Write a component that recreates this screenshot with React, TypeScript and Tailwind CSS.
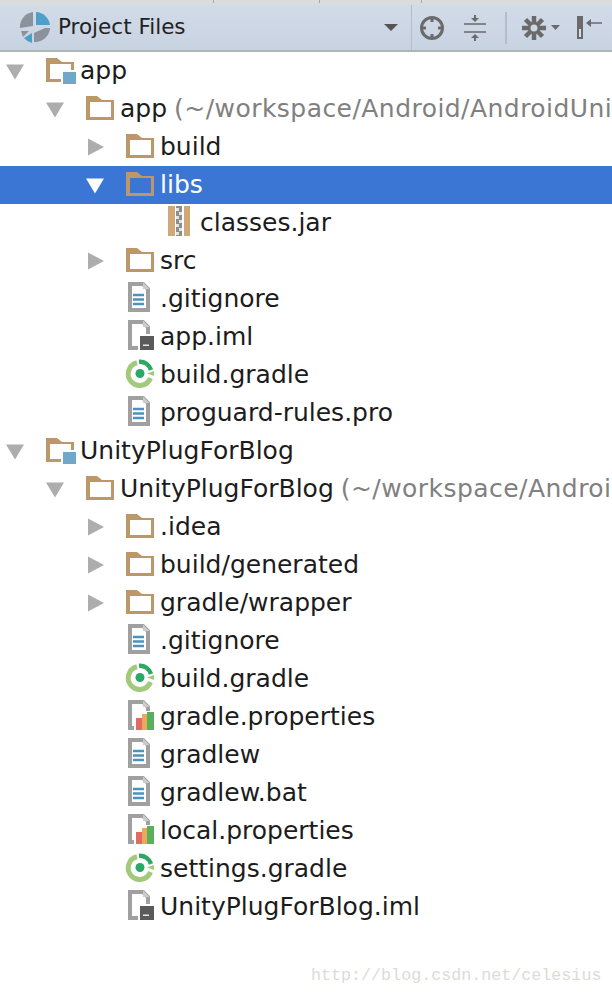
type Kind = "module" | "folder" | "jar" | "text" | "iml" | "gradle" | "props";

type Row = {
  depth: number;
  name: string;
  kind: Kind;
  arrow?: "open" | "closed";
  path?: string;
  selected?: boolean;
};

const rows: Row[] = [
  { depth: 0, name: "app", kind: "module", arrow: "open" },
  { depth: 1, name: "app", kind: "folder", arrow: "open", path: "(~/workspace/Android/AndroidUni" },
  { depth: 2, name: "build", kind: "folder", arrow: "closed" },
  { depth: 2, name: "libs", kind: "folder", arrow: "open", selected: true },
  { depth: 3, name: "classes.jar", kind: "jar" },
  { depth: 2, name: "src", kind: "folder", arrow: "closed" },
  { depth: 2, name: ".gitignore", kind: "text" },
  { depth: 2, name: "app.iml", kind: "iml" },
  { depth: 2, name: "build.gradle", kind: "gradle" },
  { depth: 2, name: "proguard-rules.pro", kind: "text" },
  { depth: 0, name: "UnityPlugForBlog", kind: "module", arrow: "open" },
  { depth: 1, name: "UnityPlugForBlog", kind: "folder", arrow: "open", path: "(~/workspace/Androi" },
  { depth: 2, name: ".idea", kind: "folder", arrow: "closed" },
  { depth: 2, name: "build/generated", kind: "folder", arrow: "closed" },
  { depth: 2, name: "gradle/wrapper", kind: "folder", arrow: "closed" },
  { depth: 2, name: ".gitignore", kind: "text" },
  { depth: 2, name: "build.gradle", kind: "gradle" },
  { depth: 2, name: "gradle.properties", kind: "props" },
  { depth: 2, name: "gradlew", kind: "text" },
  { depth: 2, name: "gradlew.bat", kind: "text" },
  { depth: 2, name: "local.properties", kind: "props" },
  { depth: 2, name: "settings.gradle", kind: "gradle" },
  { depth: 2, name: "UnityPlugForBlog.iml", kind: "iml" },
];

const indent = ["pl-0", "pl-[40px]", "pl-[80px]", "pl-[120px]"];

function Arrow({ type, selected }: { type?: "open" | "closed"; selected?: boolean }) {
  const fill = selected ? "#ffffff" : "#adadad";
  return (
    <svg width="40" height="38" viewBox="0 0 40 38" className="shrink-0">
      {type === "open" && <polygon points="6,12.5 24,12.5 15,27.5" fill={fill} />}
      {type === "closed" && <polygon points="8,10.5 8,27.5 24,19" fill={fill} />}
    </svg>
  );
}

function FileShape() {
  return (
    <g transform="translate(8 2)">
      <path d="M2 2 H15 L20 7 V28 H2 Z" fill="#ffffff" stroke="#a0a0a0" strokeWidth="4" />
      <path d="M15 0.5 V7 H21.5 Z" fill="#cccccc" />
    </g>
  );
}

function FileIcon({ kind, selected }: { kind: Kind; selected?: boolean }) {
  const brown = "#bc9767";
  const inner = selected ? "#3b76d4" : "#ffffff";
  return (
    <svg width="40" height="38" viewBox="0 0 40 38" className="shrink-0">
      {(kind === "folder" || kind === "module") && (
        <>
          <path d="M6 6 H17 L22 10 H34 V30 H6 Z" fill={brown} />
          <rect x="10" y="12" width="21" height="15" fill={inner} />
        </>
      )}
      {kind === "module" && (
        <>
          <rect x="21" y="18" width="15" height="16" fill="#ffffff" />
          <rect x="23" y="20" width="13" height="12" fill="#70a8c8" />
        </>
      )}
      {kind === "jar" && (
        <>
          <rect x="8" y="2" width="7" height="30" fill="#cfa876" />
          <rect x="24" y="2" width="6" height="30" fill="#cfa876" />
          <rect x="16" y="2" width="6" height="30" fill="#8e8e8e" />
          <path
            d="M16 4h3v3h-3zM19 8h3v3h-3zM16 12h3v3h-3zM19 16h3v3h-3zM16 20h3v3h-3zM19 24h3v3h-3zM16 28h3v3h-3z"
            fill="#e4e4e4"
          />
        </>
      )}
      {kind === "text" && (
        <>
          <FileShape />
          <path d="M13 15 H24 M13 19.5 H24 M13 24 H24" stroke="#4a92bf" strokeWidth="2.5" />
        </>
      )}
      {kind === "iml" && (
        <>
          <FileShape />
          <rect x="18" y="16" width="16" height="16" fill="#ffffff" />
          <rect x="20" y="18" width="14" height="14" fill="#5a5a5a" />
          <rect x="23" y="26.5" width="6" height="1.5" fill="#e8e8e8" />
        </>
      )}
      {kind === "props" && (
        <>
          <FileShape />
          <rect x="14" y="13" width="20" height="19" fill="#ffffff" />
          <rect x="16" y="20" width="6" height="12" fill="#e26a66" />
          <rect x="22" y="16" width="5" height="16" fill="#eca858" />
          <rect x="27" y="14" width="7" height="18" fill="#58b05c" />
        </>
      )}
      {kind === "gradle" && (
        <>
          <path d="M30.5 22 A11.5 11.5 0 1 1 17 6.8" fill="none" stroke="#a3c97c" strokeWidth="5" />
          <path d="M19 5.8 A11.5 11.5 0 0 1 31 14" fill="none" stroke="#2fa866" strokeWidth="4.5" />
          <path d="M27 17.5 L34 15 L34 20 Z" fill="#a3c97c" />
          <circle cx="20" cy="17.5" r="4.5" fill="#2aa866" />
        </>
      )}
    </svg>
  );
}

function TreeRow({ row }: { row: Row }) {
  return (
    <div
      className={`flex h-[38px] items-center overflow-hidden whitespace-nowrap ${indent[row.depth]} ${
        row.selected ? "bg-[#3b76d4] text-white" : "text-[#1c1c1c]"
      }`}
    >
      <Arrow type={row.arrow} selected={row.selected} />
      <FileIcon kind={row.kind} selected={row.selected} />
      <span>{row.name}</span>
      {row.path && <span className="ml-[7px] tracking-[0.45px] text-[#808080]">{row.path}</span>}
    </div>
  );
}

function ProjectLogo() {
  return (
    <svg width="32" height="34" viewBox="0 0 32 34" className="shrink-0">
      <path d="M14 1 A15 15 0 0 0 1 17 L14 15 Z" fill="#8b929b" />
      <path d="M17 1 A15 15 0 0 1 31 14 L17 14 Z" fill="#4d9fc8" />
      <path d="M31 17 A15 15 0 0 1 15 31 L15 22 L26 17 Z" fill="#8b929b" />
      <path d="M13 22 L13 32 A15 15 0 0 1 5 27 Z" fill="#4d9fc8" />
      <path d="M2 20 L10 20 L4 26 Z" fill="#8b929b" />
    </svg>
  );
}

function HeaderIcons() {
  return (
    <div className="ml-auto flex h-full items-center">
      <svg width="14" height="7" viewBox="0 0 14 7" className="mr-[13px]">
        <polygon points="0,0 14,0 7,7" fill="#555555" />
      </svg>
      <div className="h-full w-[1px] bg-[#b4bcc8]" />
      <svg width="26" height="26" viewBox="0 0 26 26" className="ml-[7px]">
        <circle cx="13" cy="13" r="10.5" fill="none" stroke="#6a6a6a" strokeWidth="3" />
        <path d="M13 2 V7 M13 19 V24 M2 13 H7 M19 13 H24" stroke="#6a6a6a" strokeWidth="3" />
      </svg>
      <svg width="24" height="28" viewBox="0 0 24 28" className="ml-[18px]">
        <path d="M1 10 H23 M1 18 H23" stroke="#6a6a6a" strokeWidth="1.5" />
        <path d="M12 1 V6 M12 22 V27" stroke="#6a6a6a" strokeWidth="2" />
        <path d="M8 4 H16 L12 8 Z M8 24 H16 L12 20 Z" fill="#6a6a6a" />
      </svg>
      <div className="ml-[18px] h-[32px] w-[2px] bg-[#b4bcc8]" />
      <svg width="26" height="26" viewBox="0 0 26 26" className="ml-[14px]">
        <path
          d="M13 1 V25 M1 13 H25 M4.5 4.5 L21.5 21.5 M21.5 4.5 L4.5 21.5"
          stroke="#6a6a6a"
          strokeWidth="4.5"
        />
        <circle cx="13" cy="13" r="6" fill="#6a6a6a" />
        <circle cx="13" cy="13" r="3.5" fill="#ccd6e4" />
      </svg>
      <svg width="9" height="5" viewBox="0 0 9 5" className="ml-[4px]">
        <polygon points="0,0 9,0 4.5,5" fill="#6a6a6a" />
      </svg>
      <svg width="26" height="26" viewBox="0 0 26 26" className="ml-[16px] mr-[10px]">
        <rect x="2" y="2" width="4" height="21" fill="#d8dfe9" stroke="#6a6a6a" strokeWidth="2" />
        <rect x="1" y="1" width="6" height="13" fill="#6a6a6a" />
        <path d="M12 8 H26" stroke="#6a6a6a" strokeWidth="1.5" />
        <path d="M15 4 V12 L10 8 Z" fill="#6a6a6a" />
      </svg>
    </div>
  );
}

export default function App() {
  return (
    <div className="relative h-[996px] w-[612px] overflow-hidden bg-white font-['DejaVu_Sans',sans-serif] text-[25px]">
      <div className="flex h-[5px] bg-[#dcdcdc]">
        <div className="ml-[213px] h-[3px] w-[1px] bg-[#a8a8a8]" />
        <div className="ml-[105px] h-[3px] w-[1px] bg-[#a8a8a8]" />
        <div className="ml-[101px] h-[3px] w-[1px] bg-[#a8a8a8]" />
      </div>
      <div className="flex h-[47px] items-center border-b-2 border-[#b3b3b3] bg-gradient-to-b from-[#d2dbe8] to-[#c8d3e2] pl-[19px] text-[#222222]">
        <ProjectLogo />
        <span className="ml-[7px] text-[21.5px]">Project Files</span>
        <HeaderIcons />
      </div>
      {rows.map((row, i) => (
        <TreeRow key={i} row={row} />
      ))}
      <div className="absolute left-[311px] top-[964px] font-['Liberation_Mono',monospace] text-[16.7px] leading-[24px] text-[#dcdcd6]">
        http://blog.csdn.net/celesius
      </div>
    </div>
  );
}
